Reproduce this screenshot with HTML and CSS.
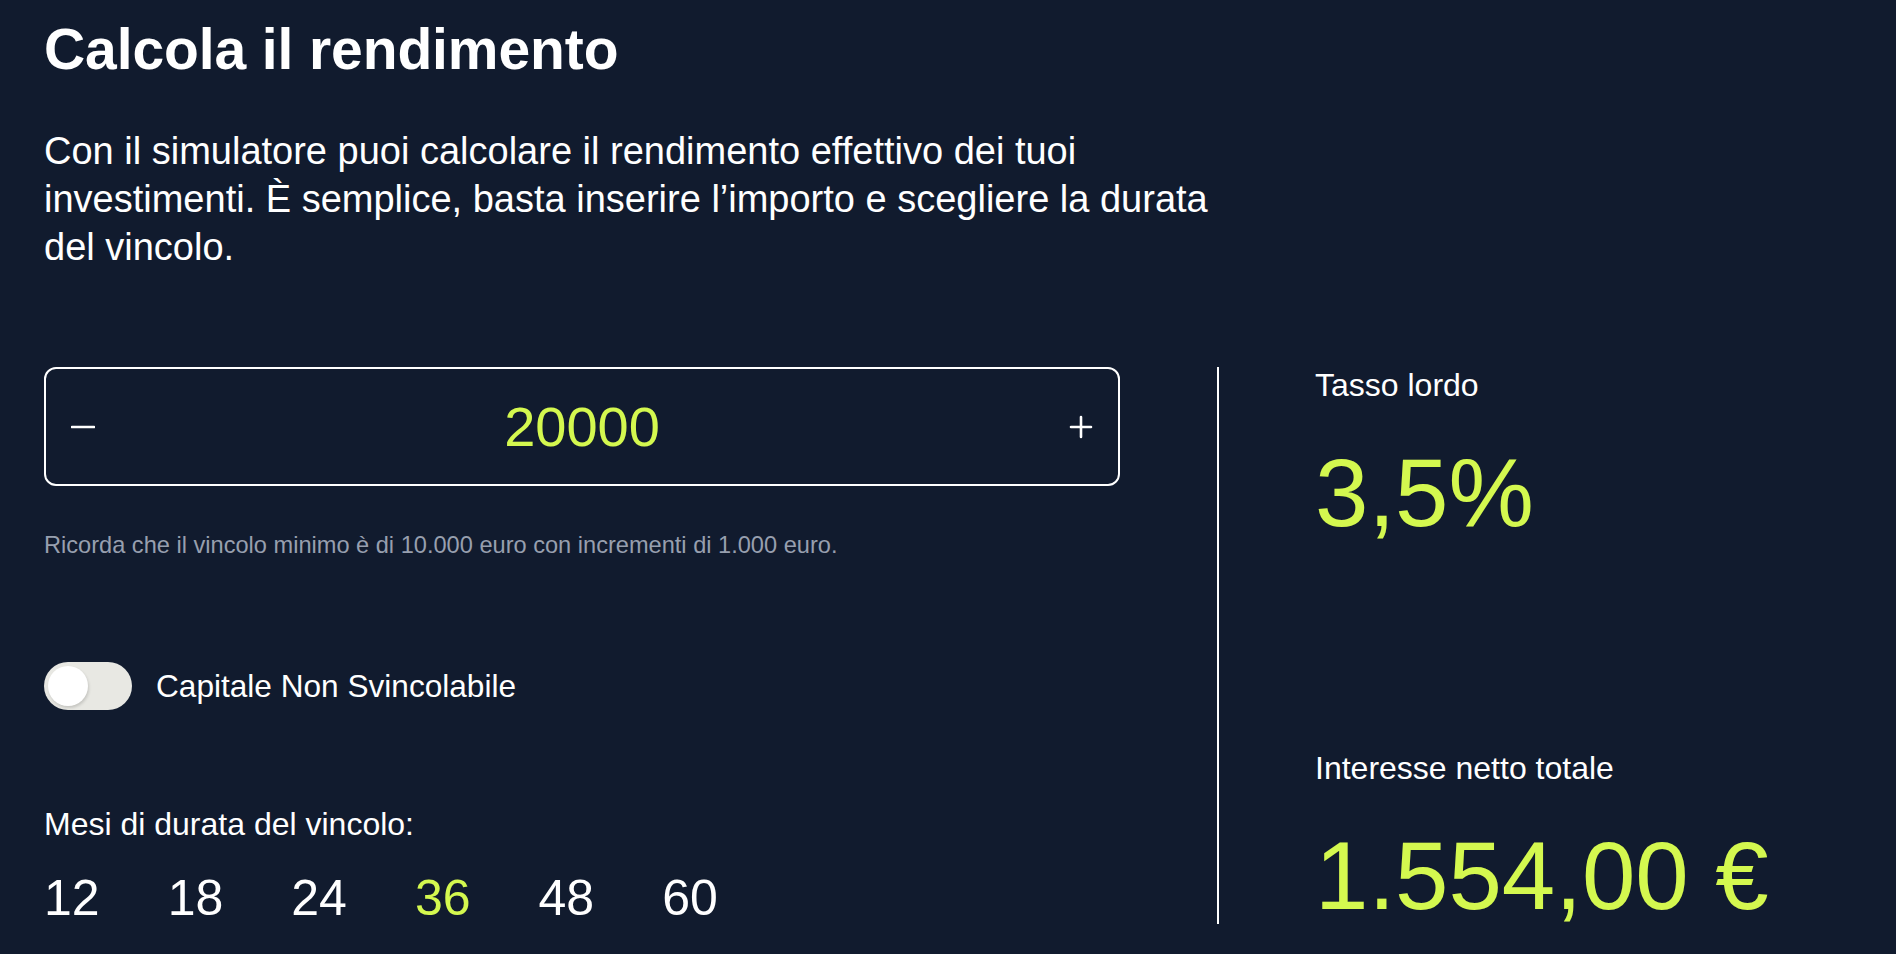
FILE: index.html
```html
<!DOCTYPE html>
<html>
<head>
  <title>Calcola il rendimento</title>
  <link rel="stylesheet" href="styles.css">
</head>
<body>
  <div class="calc">
    <h1>Calcola il rendimento</h1>
    <p class="intro">Con il simulatore puoi calcolare il rendimento effettivo dei tuoi investimenti. È semplice, basta inserire l’importo e scegliere la durata del vincolo.</p>

    <div class="calc-row">
      <div class="calc-left">
        <div class="amount">
          <button class="amount-btn" aria-label="Diminuisci">
            <svg viewBox="0 0 24 24"><path d="M1 12h22" stroke="currentColor" stroke-width="2.6" stroke-linecap="round"/></svg>
          </button>
          <span class="amount-value">20000</span>
          <button class="amount-btn" aria-label="Aumenta">
            <svg viewBox="0 0 24 24"><path d="M2 12h20M12 2v20" stroke="currentColor" stroke-width="2.6" stroke-linecap="round"/></svg>
          </button>
        </div>
        <p class="hint">Ricorda che il vincolo minimo è di 10.000 euro con incrementi di 1.000 euro.</p>

        <label class="switch-row">
          <span class="switch"><span class="knob"></span></span>
          <span class="switch-label">Capitale Non Svincolabile</span>
        </label>

        <div class="months-title">Mesi di durata del vincolo:</div>
        <ul class="months">
          <li>12</li>
          <li>18</li>
          <li>24</li>
          <li class="active">36</li>
          <li>48</li>
          <li>60</li>
        </ul>
      </div>

      <div class="divider"></div>

      <div class="calc-right">
        <div class="result">
          <div class="result-label">Tasso lordo</div>
          <div class="result-value">3,5%</div>
        </div>
        <div class="result">
          <div class="result-label">Interesse netto totale</div>
          <div class="result-value">1.554,00 €</div>
        </div>
      </div>
    </div>
  </div>
</body>
</html>
```

FILE: styles.css
```css
body {
  margin: 0;
  padding: 0;
  background-color: #111b2e;
  color: #fff;
  font-family: "Liberation Sans", Arial, sans-serif;
}

.calc {
  padding: 16px 44px 0 44px;
}

h1 {
  margin: 0;
  font-size: 57px;
  line-height: 67px;
  font-weight: 700;
  letter-spacing: -0.1px;
}

.intro {
  margin: 44px 0 0 0;
  max-width: 1180px;
  font-size: 38px;
  line-height: 48px;
}

.calc-row {
  display: flex;
  margin-top: 96px;
}

.calc-left {
  width: 1076px;
}

.amount {
  display: flex;
  align-items: center;
  justify-content: space-between;
  height: 115px;
  padding: 0 25px;
  border: 2px solid #fff;
  border-radius: 12px;
}

.amount-btn {
  background: none;
  border: none;
  padding: 0;
  color: #fff;
  width: 24px;
  height: 24px;
  cursor: pointer;
}

.amount-btn svg {
  display: block;
  width: 24px;
  height: 24px;
}

.amount-value {
  font-size: 56px;
  color: #d4f84f;
}

.hint {
  margin: 46px 0 0 0;
  font-size: 23.6px;
  line-height: 27px;
  color: #979fae;
}

.switch-row {
  display: flex;
  align-items: center;
  margin-top: 103px;
}

.switch {
  position: relative;
  width: 88px;
  height: 48px;
  border-radius: 24px;
  background-color: #e8e8e3;
}

.knob {
  position: absolute;
  top: 4px;
  left: 4px;
  width: 40px;
  height: 40px;
  border-radius: 50%;
  background-color: #fff;
  box-shadow: 1px 2px 3px rgba(0, 0, 0, 0.15);
}

.switch-label {
  margin-left: 24px;
  font-size: 31.6px;
}

.months-title {
  margin-top: 95px;
  font-size: 32px;
  line-height: 38px;
}

.months {
  display: flex;
  gap: 68px;
  list-style-type: none;
  margin: 29px 0 0 0;
  padding: 0;
  font-size: 50px;
  line-height: 52px;
}

.months li {
  cursor: pointer;
}

.months li.active {
  color: #d4f84f;
}

.divider {
  width: 2px;
  margin: 0 96px 0 97px;
  background-color: #fff;
}

.calc-right {
  display: flex;
  flex-direction: column;
  justify-content: space-between;
}

.result-label {
  font-size: 32px;
  line-height: 36px;
}

.result-value {
  margin-top: 42px;
  font-size: 96px;
  line-height: 96px;
  color: #d4f84f;
}
```
